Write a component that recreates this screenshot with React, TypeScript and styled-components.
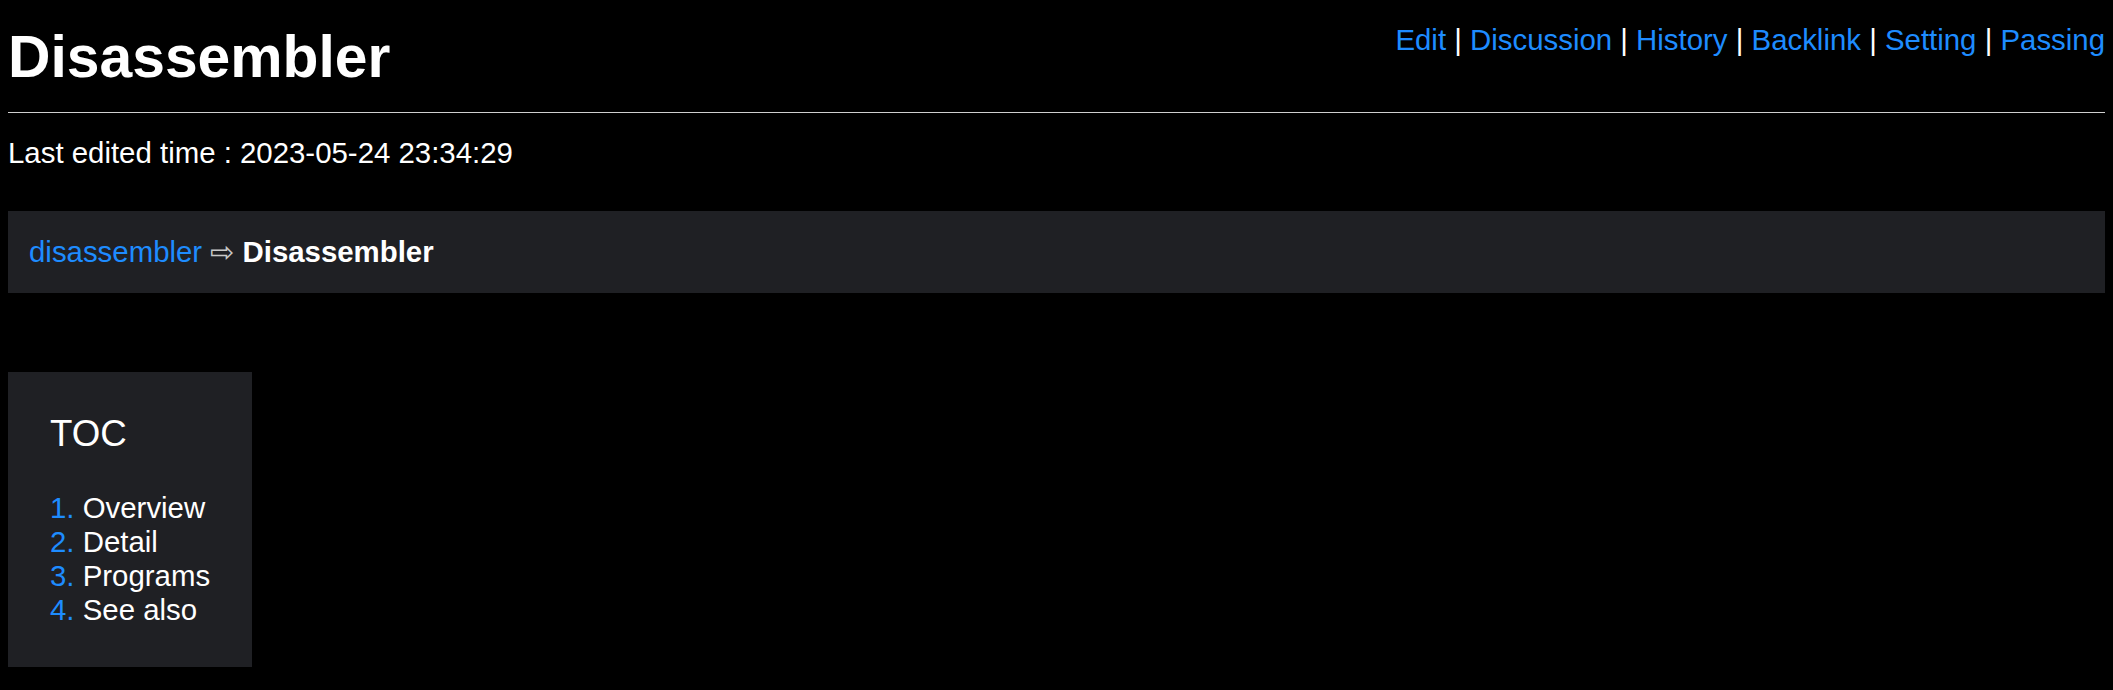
import styled, { createGlobalStyle } from 'styled-components'

const GlobalStyle = createGlobalStyle`
  body {
    margin: 8px;
    background: #000;
    color: #fff;
    font-family: "Liberation Sans", Arial, sans-serif;
    font-size: 29.4px;
  }
`

const navLinks = ['Edit', 'Discussion', 'History', 'Backlink', 'Setting', 'Passing']
const tocItems = ['Overview', 'Detail', 'Programs', 'See also']

export default function App() {
  return (
    <>
      <GlobalStyle />
      <Header>
        <Title>Disassembler</Title>
        <Nav>
          {navLinks.map((name, i) => (
            <span key={name}>
              {i > 0 ? <Separator> | </Separator> : null}
              <Link href="#">{name}</Link>
            </span>
          ))}
        </Nav>
      </Header>
      <Rule />
      <EditedTime>Last edited time : 2023-05-24 23:34:29</EditedTime>
      <Breadcrumb>
        <Link href="#">disassembler</Link>
        <Arrow> ⇨ </Arrow>
        <Current>Disassembler</Current>
      </Breadcrumb>
      <Toc>
        <TocTitle>TOC</TocTitle>
        <TocList>
          {tocItems.map((item, i) => (
            <TocItem key={item}>
              <Link href="#">{i + 1}.</Link> {item}
            </TocItem>
          ))}
        </TocList>
      </Toc>
    </>
  )
}

const Header = styled.header`
  display: flex;
  justify-content: space-between;
  align-items: flex-start;
  padding-top: 15px;
`

const Title = styled.h1`
  margin: 0;
  font-size: 58.8px;
  font-weight: bold;
  line-height: normal;
`

const Nav = styled.nav`
  font-size: 29.4px;
  line-height: normal;
  white-space: nowrap;
`

const Link = styled.a`
  color: #1e8cff;
  text-decoration: none;
`

const Separator = styled.span`
  color: #fff;
`

const Rule = styled.div`
  margin-top: 22px;
  height: 1px;
  background: #cfcfcf;
`

const EditedTime = styled.div`
  margin-top: 23px;
  line-height: normal;
`

const Breadcrumb = styled.div`
  margin-top: 41px;
  padding: 24px 21px;
  background: #1f2024;
  line-height: normal;
`

const Arrow = styled.span`
  color: #c8c8c8;
`

const Current = styled.strong`
  font-weight: bold;
`

const Toc = styled.div`
  margin-top: 79px;
  width: fit-content;
  padding: 41px 42px 40px 42px;
  background: #1f2024;
`

const TocTitle = styled.div`
  font-size: 36.7px;
  line-height: normal;
  margin-bottom: 36px;
`

const TocList = styled.ol`
  margin: 0;
  padding: 0;
  list-style: none;
`

const TocItem = styled.li`
  line-height: normal;
`
